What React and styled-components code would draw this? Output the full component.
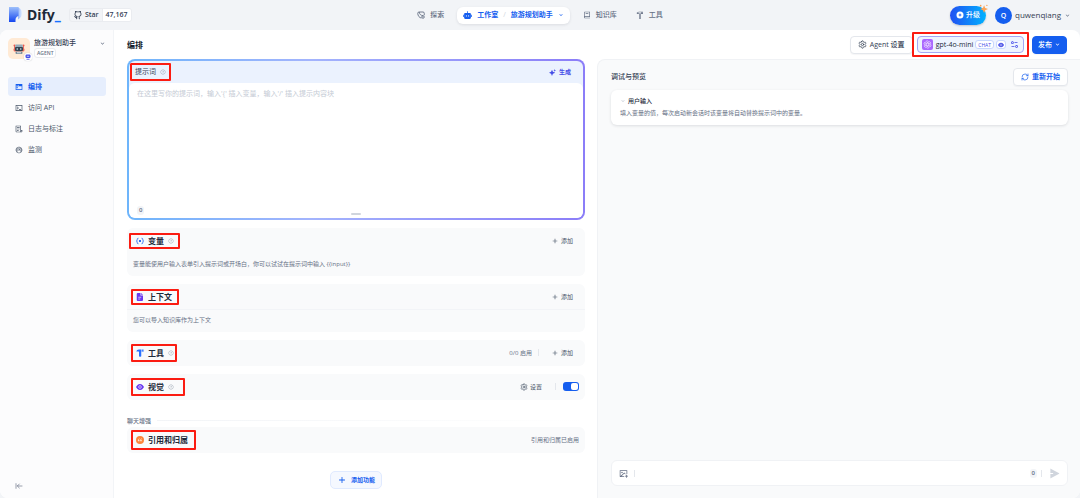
import React, { useState } from 'react';
import styled, { createGlobalStyle, css } from 'styled-components';
import {
  RiTerminalWindowFill,
  RiTerminalBoxLine,
  RiFileList3Line,
  RiDashboard2Line,
  RiRobot2Fill,
  RiBook2Line,
  RiHammerLine,
  RiArrowDownSLine,
  RiSendPlane2Fill,
  RiGithubLine,
  RiEqualizer2Line,
  RiImageAddLine,
  RiAddLine,
  RiQuestionLine,
} from 'react-icons/ri';
import { Settings, RefreshCw, ArrowLeftToLine } from 'lucide-react';

const GlobalStyle = createGlobalStyle`
  * {
    box-sizing: border-box;
  }
  body {
    margin: 0;
    background: #f2f4f7;
    color: #344054;
    font-family: 'Open Sans', 'Noto Sans CJK SC', sans-serif;
    font-size: 7px;
    line-height: 10px;
  }
  button, input, textarea {
    font: inherit;
    color: inherit;
    margin: 0;
    padding: 0;
    border: 0;
    background: none;
  }
  button {
    cursor: pointer;
  }
  a {
    color: inherit;
    text-decoration: none;
  }
  svg {
    display: block;
    flex: none;
  }
`;

const Page = styled.div`
  display: flex;
  flex-direction: column;
  min-height: 100vh;
`;

/* ---------- top bar ---------- */

const TopBar = styled.header`
  display: flex;
  align-items: center;
  height: 30px;
  padding: 0 9px;
`;
const TopSide = styled.div`
  display: flex;
  align-items: center;
  flex: 1;
  ${props =>
    props.$end &&
    css`
      justify-content: flex-end;
    `}
`;
const Logo = styled.a`
  display: flex;
  align-items: center;
  gap: 5px;
  margin-right: 8px;
`;
const LogoText = styled.span`
  color: #1d2939;
  font-family: 'Noto Sans', sans-serif;
  font-size: 14px;
  font-weight: 700;
  line-height: 16px;
  span {
    color: #1570ff;
    font-size: 12px;
    font-weight: 900;
  }
`;
const StarBadge = styled.a`
  display: flex;
  height: 14px;
  overflow: hidden;
  border: 1px solid #eaecf0;
  border-radius: 3px;
  font-weight: 600;
  line-height: 12px;
`;
const StarLabel = styled.span`
  display: flex;
  align-items: center;
  gap: 2px;
  padding: 0 3px;
  border-right: 1px solid #eaecf0;
`;
const StarCount = styled.span`
  padding: 0 3px;
  background: #fff;
`;
const Nav = styled.nav`
  display: flex;
  align-items: center;
  gap: 7px;
`;
const NavItem = styled.a`
  display: flex;
  align-items: center;
  gap: 5px;
  height: 17px;
  padding: 0 6px;
  border-radius: 6px;
  color: #667085;
  font-weight: 500;
  ${props =>
    props.$active &&
    css`
      background: #fff;
      color: #155eef;
      font-weight: 700;
      box-shadow: 0 1px 3px rgba(16, 24, 40, 0.1);
    `}
`;
const Slash = styled.span`
  color: #d0d5dd;
  font-weight: 400;
`;
const UpgradeButton = styled.button`
  position: relative;
  display: flex;
  align-items: center;
  gap: 2px;
  height: 19px;
  margin-right: 9px;
  padding: 0 6px;
  border-radius: 10px;
  background: linear-gradient(90deg, #2250f2, #00b2ff);
  box-shadow: 0 1px 2px rgba(16, 24, 40, 0.2);
  color: #fff;
  font-weight: 500;
`;
const Sparkles = styled.svg`
  position: absolute;
  top: -2px;
  right: -2px;
`;
const UserButton = styled.button`
  display: flex;
  align-items: center;
  gap: 3px;
  font-size: 8px;
  svg {
    color: #667085;
  }
`;
const Avatar = styled.span`
  width: 17px;
  height: 17px;
  border-radius: 50%;
  background: #155eef;
  color: #fff;
  font-size: 7px;
  font-weight: 600;
  line-height: 17px;
  text-align: center;
`;

/* ---------- sidebar ---------- */

const Main = styled.div`
  display: flex;
  flex: 1;
  overflow: hidden;
  border-radius: 8px;
  background: #fff;
`;
const Sidebar = styled.aside`
  display: flex;
  flex-direction: column;
  width: 114px;
  padding: 8px 7px 8px 8px;
  border-right: 1px solid #f2f4f7;
  background: #fcfcfd;
`;
const AppInfo = styled.div`
  display: flex;
  gap: 4px;
  margin-bottom: 18px;
`;
const AppIcon = styled.div`
  position: relative;
  display: flex;
  align-items: center;
  justify-content: center;
  width: 22px;
  height: 21px;
  border-radius: 5px;
  background: #ffead5;
`;
const AppBadge = styled.span`
  position: absolute;
  right: -2px;
  bottom: -2px;
  padding: 1px;
  border-radius: 3px;
  background: #fff;
  box-shadow: 0 0 1px rgba(16, 24, 40, 0.3);
`;
const AppText = styled.div`
  flex: 1;
`;
const AppName = styled.div`
  display: flex;
  align-items: center;
  justify-content: space-between;
  font-weight: 500;
  svg {
    color: #667085;
  }
`;
const Tag = styled.span`
  display: inline-block;
  padding: 0 2px;
  border: 1px solid #eaecf0;
  border-radius: 3px;
  background: #fff;
  color: #667085;
  font-size: 5px;
  font-weight: 600;
  line-height: 8px;
  vertical-align: top;
`;
const Menu = styled.nav`
  display: flex;
  flex-direction: column;
  gap: 2px;
  flex: 1;
`;
const MenuItem = styled.a`
  display: flex;
  align-items: center;
  gap: 5px;
  height: 19px;
  padding: 0 7px;
  border-radius: 3px;
  color: #475467;
  ${props =>
    props.$active &&
    css`
      background: #e6eefd;
      color: #155eef;
      font-weight: 600;
    `}
`;
const CollapseButton = styled.button`
  align-self: flex-start;
  padding: 0 7px;
  color: #667085;
`;

/* ---------- workspace ---------- */

const Workspace = styled.main`
  display: flex;
  flex-direction: column;
  flex: 1;
  min-width: 0;
`;
const Toolbar = styled.div`
  display: flex;
  align-items: center;
  justify-content: space-between;
  height: 29px;
  padding: 0 13px;
`;
const Title = styled.h1`
  margin: 0;
  color: #101828;
  font-size: 8px;
  font-weight: 700;
`;
const Actions = styled.div`
  display: flex;
  align-items: center;
  gap: 4px;
`;
const Button = styled.button`
  display: flex;
  align-items: center;
  gap: 3px;
  height: 18px;
  padding: 0 7px;
  border: 1px solid #e4e7ec;
  border-radius: 4px;
  background: #fff;
  font-weight: 500;
  box-shadow: 0 1px 1px rgba(16, 24, 40, 0.04);
  ${props =>
    props.$accent &&
    css`
      color: #155eef;
      font-weight: 600;
    `}
  ${props =>
    props.$primary &&
    css`
      gap: 2px;
      margin-left: 4px;
      padding: 0 5px;
      border-color: #155eef;
      background: #155eef;
      color: #fff;
    `}
`;
const ModelButton = styled.button`
  display: flex;
  align-items: center;
  gap: 2px;
  height: 17px;
  padding: 0 4px;
  border: 1px solid #a4a8f5;
  border-radius: 4px;
  background: #eef4ff;
  color: #1d2939;
  font-weight: 500;
`;
const ModelIcon = styled.span`
  display: flex;
  align-items: center;
  justify-content: center;
  width: 11px;
  height: 11px;
  margin-right: 1px;
  border-radius: 2px;
  background: #ab68ff;
`;
const ModelTag = styled.span`
  display: flex;
  align-items: center;
  height: 9px;
  padding: 0 ${props => (props.$icon ? 1 : 2)}px;
  border: 1px solid #c7d7fe;
  border-radius: 3px;
  background: #fff;
  color: #444ce7;
  font-size: 5px;
`;
const ModelSettings = styled.span`
  margin-left: 2px;
  color: #444ce7;
`;

/* red frame drawn round a highlighted control */
const Marked = styled.div`
  position: relative;
  display: flex;
  align-items: center;
  gap: ${props => props.$gap || 0}px;
  &::after {
    content: '';
    position: absolute;
    inset: ${props => props.$inset};
    border: 2px solid #fb1c12;
    border-radius: 1px;
    pointer-events: none;
  }
`;

const Columns = styled.div`
  display: grid;
  grid-template-columns: 1fr 1fr;
  flex: 1;
`;
const ConfigColumn = styled.div`
  display: flex;
  flex-direction: column;
  gap: 8px;
  padding: 0 12px 8px 13px;
`;
const PromptFrame = styled.section`
  padding: 2px;
  border-radius: 8px;
  background: linear-gradient(90deg, #6eb5fb, #a3b4fd 40%, #8b7df8);
`;
const PromptBox = styled.div`
  overflow: hidden;
  border-radius: 6px;
  background: #ebf2fe;
`;
const PromptHead = styled.div`
  display: flex;
  align-items: center;
  justify-content: space-between;
  height: 22px;
  padding: 0 12px 0 6px;
`;
const GenerateButton = styled.button`
  display: flex;
  align-items: center;
  gap: 3px;
  color: #444ce7;
  font-size: 6px;
  font-weight: 600;
`;
const PromptBody = styled.div`
  border-radius: 6px;
  background: #fff;
`;
const PromptInput = styled.textarea`
  display: block;
  width: 100%;
  height: 120px;
  padding: 6px 8px;
  outline: none;
  resize: none;
  &::placeholder {
    color: #c4cad4;
    opacity: 1;
  }
`;
const PromptFoot = styled.div`
  display: grid;
  grid-template-columns: 1fr auto 1fr;
  align-items: end;
  height: 15px;
  padding: 0 8px 3px;
`;
const Counter = styled.span`
  justify-self: start;
  padding: 0 2px;
  border-radius: 3px;
  background: #f2f4f7;
  color: #667085;
  font-size: 6px;
  font-weight: 600;
  line-height: 9px;
`;
const Grip = styled.span`
  width: 10px;
  height: 2px;
  border-radius: 1px;
  background: #d0d5dd;
`;

const Panel = styled.section`
  border-radius: 6px;
  background: #f9fafb;
`;
const PanelHead = styled.div`
  display: flex;
  align-items: center;
  justify-content: space-between;
  height: 26px;
  padding: 0 6px 0 9px;
  border-bottom: 1px solid ${props => (props.$line ? '#f2f4f7' : 'transparent')};
`;
const PanelTitle = styled.span`
  color: #1d2939;
  font-size: 8px;
  font-weight: 700;
`;
const PanelBody = styled.div`
  height: 22px;
  padding: 5px 6px;
  color: #667085;
  font-size: 6px;
`;
const PanelTools = styled.div`
  display: flex;
  align-items: center;
  color: #667085;
  font-size: 6px;
`;
const SmallButton = styled.button`
  display: flex;
  align-items: center;
  gap: 2px;
  padding: 0 6px;
  color: #475467;
  font-size: 6px;
`;
const Divider = styled.span`
  width: 1px;
  height: 7px;
  margin: 0 ${props => props.$space || 4}px;
  background: #e4e7ec;
`;
const Switch = styled.input`
  appearance: none;
  display: flex;
  justify-content: flex-end;
  width: 16px;
  height: 9px;
  padding: 1px;
  border-radius: 3px;
  background: #d0d5dd;
  cursor: pointer;
  &::before {
    content: '';
    width: 7px;
    height: 7px;
    border-radius: 2px;
    background: #fff;
  }
  &:checked {
    background: #155eef;
  }
  &:not(:checked) {
    justify-content: flex-start;
  }
`;
const Group = styled.div`
  padding-top: 6px;
`;
const GroupLabel = styled.div`
  display: flex;
  align-items: center;
  gap: 6px;
  height: 13px;
  color: #667085;
  font-size: 6px;
  font-weight: 500;
  &::after {
    content: '';
    flex: 1;
    height: 1px;
    background: linear-gradient(90deg, #f2f4f7, #fff);
  }
`;
const AddFeature = styled.button`
  display: flex;
  align-items: center;
  align-self: center;
  gap: 4px;
  height: 18px;
  margin-top: 10px;
  padding: 0 6px;
  border: 1px solid #e0eaff;
  border-radius: 5px;
  background: #f5f8ff;
  color: #155eef;
  font-size: 6px;
  font-weight: 600;
`;

/* ---------- debug and preview ---------- */

const PreviewColumn = styled.section`
  display: flex;
  flex-direction: column;
  padding: 8px 12px 12px 13px;
  border: 1px solid #f0f2f5;
  border-width: 1px 0 0 1px;
  border-radius: 8px 0 0 0;
  background: #f9fafb;
`;
const PreviewHead = styled.div`
  display: flex;
  align-items: center;
  justify-content: space-between;
  margin-bottom: 4px;
`;
const PreviewTitle = styled.h2`
  margin: 0;
  font-size: 7px;
  font-weight: 500;
`;
const InputCard = styled.div`
  padding: 5px 9px 6px;
  border-radius: 6px;
  background: #fff;
  box-shadow: 0 1px 3px rgba(16, 24, 40, 0.12);
`;
const CardTitle = styled.button`
  display: flex;
  align-items: center;
  gap: 2px;
  height: 12px;
  color: #1d2939;
  font-size: 6px;
  font-weight: 500;
  svg {
    color: #c0c7d2;
  }
`;
const CardText = styled.p`
  margin: 0;
  color: #667085;
  font-size: 6px;
  line-height: 12px;
`;
const ChatBar = styled.form`
  display: flex;
  align-items: center;
  height: 26px;
  margin-top: auto;
  padding: 0 7px;
  border: 1px solid #f0f2f5;
  border-radius: 6px;
  background: #fff;
  color: #667085;
`;
const ChatInput = styled.input`
  flex: 1;
  min-width: 0;
  outline: none;
`;
const SendButton = styled.button`
  padding-left: 3px;
  color: #d0d5dd;
`;

/* ---------- drawings ---------- */

const LogoMark = () => (
  <svg width="13" height="16" viewBox="0 0 13 16">
    <defs>
      <linearGradient id="logoBar" x1="0" y1="0" x2="0" y2="1">
        <stop offset="0" stopColor="#9dc0fb" />
        <stop offset="1" stopColor="#1446f0" />
      </linearGradient>
      <linearGradient id="logoBowl" x1="0" y1="0" x2="1" y2="0">
        <stop offset="0.3" stopColor="#2f6ff5" />
        <stop offset="1" stopColor="#e3eeff" />
      </linearGradient>
    </defs>
    <path d="M0 0h7a6 6 0 0 1 6 6c0 3.3-1.500 5-4 6.500V0z" fill="url(#logoBowl)" />
    <path d="M0 0h9.500V9c-2 .5-3 2-3 4v2H0z" fill="url(#logoBar)" />
  </svg>
);

const ExploreIcon = () => (
  <svg width="8" height="8" viewBox="0 0 16 16" fill="none" stroke="currentColor" strokeWidth="1.8">
    <path d="M14.500 8.500v-4a2.500 2.500 0 0 0-2.500-2.500H4a2.500 2.500 0 0 0-2.500 2.500C1.500 9.500 5 14 9 14" />
    <path d="M4.500 2c0 4 3 7 8 7.500" />
    <circle cx="12" cy="12" r="2.500" />
  </svg>
);

const RobotFace = () => (
  <svg width="12" height="12" viewBox="0 0 24 24">
    <circle cx="3" cy="5" r="2" fill="#f0554a" />
    <circle cx="21" cy="5" r="2" fill="#f0554a" />
    <path d="M2 6h2v6H2zM20 6h2v6h-2z" fill="#e9695c" />
    <path d="M5 3h14l1 9H4z" fill="#94aab8" />
    <rect x="1" y="10" width="22" height="7" rx="3" fill="#e9695c" />
    <rect x="4" y="8" width="16" height="8" rx="2" fill="#344450" />
    <circle cx="8.500" cy="12" r="1.500" fill="#d7f2fb" />
    <circle cx="15.500" cy="12" r="1.500" fill="#d7f2fb" />
    <rect x="5" y="17" width="14" height="5" rx="2" fill="#7c909d" />
    <path d="M8 19.500h8" stroke="#fff" strokeWidth="1.500" />
  </svg>
);

const AgentIcon = () => (
  <svg width="6" height="6" viewBox="0 0 12 12">
    <rect x="1" y="1" width="10" height="7" rx="2.500" fill="#444ce7" />
    <path d="M3.500 4.500h5" stroke="#fff" strokeWidth="1.400" />
    <path d="M3 10.500h6" stroke="#444ce7" strokeWidth="1.600" />
  </svg>
);

const VariableIcon = () => (
  <svg width="8" height="8" viewBox="0 0 16 16" fill="none" stroke="#2e6ff2" strokeWidth="2" strokeLinecap="round">
    <path d="M4 2.500c-2 0-1.500 2-1.500 3S2 8 1 8c1 0 1.500 1.500 1.500 2.500s-.5 3 1.500 3" />
    <path d="M12 2.500c2 0 1.500 2 1.500 3S14 8 15 8c-1 0-1.500 1.500-1.500 2.500s.5 3-1.500 3" />
    <path d="M6.500 6.500l3 3M9.500 6.500l-3 3" />
  </svg>
);

const ContextIcon = () => (
  <svg width="8" height="8" viewBox="0 0 16 16">
    <path d="M3.500 0H9v5h5v9a2 2 0 0 1-2 2H3.500a2 2 0 0 1-2-2V2a2 2 0 0 1 2-2z" fill="#6938ef" />
    <path d="M10.300 0L14 3.700h-3.700z" fill="#6938ef" />
    <path d="M4.500 8.500h6M4.500 12h4" stroke="#fff" strokeWidth="1.300" />
  </svg>
);

const ToolIcon = () => (
  <svg width="8" height="8" viewBox="0 0 16 16" fill="#2970ff">
    <path d="M1 5.500c0-3 2-4.500 5-4.500h5v4.500h-.5V14a1.500 1.500 0 0 1-1.500 1.500H7.500A1.500 1.500 0 0 1 6 14V5.500C4 4.500 2.500 4.500 1 5.500z" />
    <path d="M12.300 1H15v4.500h-1.500L12.300 5z" />
  </svg>
);

const VisionIcon = ({ size = 8, color = '#6938ef' }) => (
  <svg width={size} height={size} viewBox="0 0 16 16">
    <path d="M8 2C4 2 1.500 5 0 8c1.500 3 4 6 8 6s6.500-3 8-6c-1.500-3-4-6-8-6z" fill={color} />
    <circle cx="8" cy="8" r="2.700" fill="none" stroke="#fff" strokeWidth="1.200" />
  </svg>
);

const QuoteIcon = () => (
  <svg width="8" height="8" viewBox="0 0 16 16">
    <circle cx="8" cy="8" r="8" fill="#fd853a" />
    <path d="M7 5.500C5 6 4.500 7 4.500 9" fill="none" stroke="#fff" strokeWidth="1.200" />
    <path d="M11.500 5.500C9.500 6 9 7 9 9" fill="none" stroke="#fff" strokeWidth="1.200" />
    <circle cx="5.600" cy="9.300" r="1.400" fill="#fff" />
    <circle cx="10.100" cy="9.300" r="1.400" fill="#fff" />
  </svg>
);

const SparkIcon = () => (
  <svg width="7" height="7" viewBox="0 0 14 14" fill="#444ce7">
    <path d="M6 1.500l1.800 4L12.500 7.500 7.800 9.500 6 14 4.200 9.500-.5 7.500 4.200 5.500z" />
    <path d="M11.500 0l.7 2 1.800.7-1.800.7-.7 2-.7-2L9 2.700l1.800-.7z" />
  </svg>
);

const OpenAiIcon = () => (
  <svg width="9" height="9" viewBox="0 0 18 18" fill="none" stroke="#fff" strokeWidth="1.100">
    {[0, 60, 120, 180, 240, 300].map(angle => (
      <path key={angle} d="M9 6L5.700 7.900V4.500a2.800 2.800 0 0 1 5-1.700" transform={`rotate(${angle} 9 9)`} />
    ))}
  </svg>
);

const UpgradeIcon = () => (
  <svg width="8" height="8" viewBox="0 0 16 16">
    <circle cx="8" cy="8" r="7" fill="#fff" />
    <path d="M8 4l1.200 2.800L12 8 9.200 9.200 8 12 6.800 9.200 4 8l2.800-1.200z" fill="#2563f4" />
  </svg>
);

const menuItems = [
  { text: '编排', Icon: RiTerminalWindowFill, active: true },
  { text: '访问 API', Icon: RiTerminalBoxLine },
  { text: '日志与标注', Icon: RiFileList3Line },
  { text: '监测', Icon: RiDashboard2Line },
];

const Help = () => <RiQuestionLine size={6} color="#a4adba" />;

const AddButton = () => (
  <SmallButton type="button">
    <RiAddLine size={8} />
    添加
  </SmallButton>
);

const Header = () => (
  <TopBar>
    <TopSide>
      <Logo href="#" aria-label="Dify">
        <LogoMark />
        <LogoText>
          Dify<span>_</span>
        </LogoText>
      </Logo>
      <StarBadge href="#">
        <StarLabel>
          <RiGithubLine size={10} />
          Star
        </StarLabel>
        <StarCount>47,167</StarCount>
      </StarBadge>
    </TopSide>
    <Nav>
      <NavItem href="#">
        <ExploreIcon />
        探索
      </NavItem>
      <NavItem href="#" $active>
        <RiRobot2Fill size={9} />
        工作室
        <Slash>/</Slash>
        旅游规划助手
        <RiArrowDownSLine size={6} />
      </NavItem>
      <NavItem href="#">
        <RiBook2Line size={8} />
        知识库
      </NavItem>
      <NavItem href="#">
        <RiHammerLine size={8} />
        工具
      </NavItem>
    </Nav>
    <TopSide $end>
      <UpgradeButton type="button">
        <UpgradeIcon />
        升级
        <Sparkles width="9" height="9" viewBox="0 0 16 16" fill="#fda355">
          <path d="M9 2l2 5 5 2-5 2-2 5-2-5-5-2 5-2z" />
          <circle cx="3" cy="3" r="1.500" />
          <circle cx="14" cy="2.500" r="1.200" />
        </Sparkles>
      </UpgradeButton>
      <UserButton type="button">
        <Avatar>Q</Avatar>
        quwenqiang
        <RiArrowDownSLine size={7} />
      </UserButton>
    </TopSide>
  </TopBar>
);

const SideMenu = () => (
  <Sidebar>
    <AppInfo>
      <AppIcon>
        <RobotFace />
        <AppBadge>
          <AgentIcon />
        </AppBadge>
      </AppIcon>
      <AppText>
        <AppName>
          旅游规划助手
          <RiArrowDownSLine size={7} />
        </AppName>
        <Tag>AGENT</Tag>
      </AppText>
    </AppInfo>
    <Menu>
      {menuItems.map(({ text, Icon, active }) => (
        <MenuItem key={text} href="#" $active={active}>
          <Icon size={8} />
          {text}
        </MenuItem>
      ))}
    </Menu>
    <CollapseButton type="button" aria-label="收起">
      <ArrowLeftToLine size={8} />
    </CollapseButton>
  </Sidebar>
);

const Config = () => {
  const [prompt, setPrompt] = useState('');
  const [vision, setVision] = useState(true);
  return (
    <ConfigColumn>
      <PromptFrame>
        <PromptBox>
          <PromptHead>
            <Marked $gap={4} $inset="-4px -5px">
              <label htmlFor="prompt">提示词</label>
              <Help />
            </Marked>
            <GenerateButton type="button">
              <SparkIcon />
              生成
            </GenerateButton>
          </PromptHead>
          <PromptBody>
            <PromptInput
              id="prompt"
              value={prompt}
              onChange={e => setPrompt(e.target.value)}
              placeholder="在这里写你的提示词，输入'{' 插入变量，输入'/' 插入提示内容块"
            />
            <PromptFoot>
              <Counter>{prompt.length}</Counter>
              <Grip />
            </PromptFoot>
          </PromptBody>
        </PromptBox>
      </PromptFrame>
      <Panel>
        <PanelHead>
          <Marked $gap={4} $inset="-3px -6px -3px -7px">
            <VariableIcon />
            <PanelTitle>变量</PanelTitle>
            <Help />
          </Marked>
          <AddButton />
        </PanelHead>
        <PanelBody>变量能使用户输入表单引入提示词或开场白，你可以试试在提示词中输入 {'{{input}}'}</PanelBody>
      </Panel>
      <Panel>
        <PanelHead $line>
          <Marked $gap={4} $inset="-3px -7px -3px -5px">
            <ContextIcon />
            <PanelTitle>上下文</PanelTitle>
          </Marked>
          <AddButton />
        </PanelHead>
        <PanelBody>您可以导入知识库作为上下文</PanelBody>
      </Panel>
      <Panel>
        <PanelHead>
          <Marked $gap={4} $inset="-4px -3px -4px -5px">
            <ToolIcon />
            <PanelTitle>工具</PanelTitle>
            <Help />
          </Marked>
          <PanelTools>
            0/0 启用
            <Divider $space={6} />
            <AddButton />
          </PanelTools>
        </PanelHead>
      </Panel>
      <Panel>
        <PanelHead>
          <Marked $gap={4} $inset="-4px -11px -4px -5px">
            <VisionIcon />
            <PanelTitle>视觉</PanelTitle>
            <Help />
          </Marked>
          <PanelTools>
            <SmallButton type="button">
              <Settings size={8} />
              设置
            </SmallButton>
            <Divider $space={7} />
            <Switch type="checkbox" aria-label="视觉" checked={vision} onChange={e => setVision(e.target.checked)} />
          </PanelTools>
        </PanelHead>
      </Panel>
      <Group>
        <GroupLabel>聊天增强</GroupLabel>
        <Panel>
          <PanelHead>
            <Marked $gap={4} $inset="-5px -8px -5px -5px">
              <QuoteIcon />
              <PanelTitle>引用和归属</PanelTitle>
            </Marked>
            <PanelTools>引用和归属已启用</PanelTools>
          </PanelHead>
        </Panel>
      </Group>
      <AddFeature type="button">
        <RiAddLine size={10} />
        添加功能
      </AddFeature>
    </ConfigColumn>
  );
};

const Preview = () => {
  const [message, setMessage] = useState('');
  return (
    <PreviewColumn>
      <PreviewHead>
        <PreviewTitle>调试与预览</PreviewTitle>
        <Button type="button" $accent>
          <RefreshCw size={8} />
          重新开始
        </Button>
      </PreviewHead>
      <InputCard>
        <CardTitle type="button">
          <RiArrowDownSLine size={6} />
          用户输入
        </CardTitle>
        <CardText>填入变量的值，每次启动新会话时该变量将自动替换提示词中的变量。</CardText>
      </InputCard>
      <ChatBar onSubmit={e => e.preventDefault()}>
        <RiImageAddLine size={9} />
        <Divider $space={6} />
        <ChatInput aria-label="消息" value={message} onChange={e => setMessage(e.target.value)} />
        <Counter>{message.length}</Counter>
        <Divider />
        <SendButton type="submit" aria-label="发送">
          <RiSendPlane2Fill size={11} />
        </SendButton>
      </ChatBar>
    </PreviewColumn>
  );
};

const App = () => (
  <>
    <GlobalStyle />
    <Page>
      <Header />
      <Main>
        <SideMenu />
        <Workspace>
          <Toolbar>
            <Title>编排</Title>
            <Actions>
              <Button type="button">
                <Settings size={9} />
                Agent 设置
              </Button>
              <Marked $inset="-4px -5px">
                <ModelButton type="button">
                  <ModelIcon>
                    <OpenAiIcon />
                  </ModelIcon>
                  gpt-4o-mini
                  <ModelTag>CHAT</ModelTag>
                  <ModelTag $icon>
                    <VisionIcon size={6} color="#444ce7" />
                  </ModelTag>
                  <ModelSettings>
                    <RiEqualizer2Line size={9} />
                  </ModelSettings>
                </ModelButton>
              </Marked>
              <Button type="button" $primary>
                发布
                <RiArrowDownSLine size={7} />
              </Button>
            </Actions>
          </Toolbar>
          <Columns>
            <Config />
            <Preview />
          </Columns>
        </Workspace>
      </Main>
    </Page>
  </>
);

export default App;
